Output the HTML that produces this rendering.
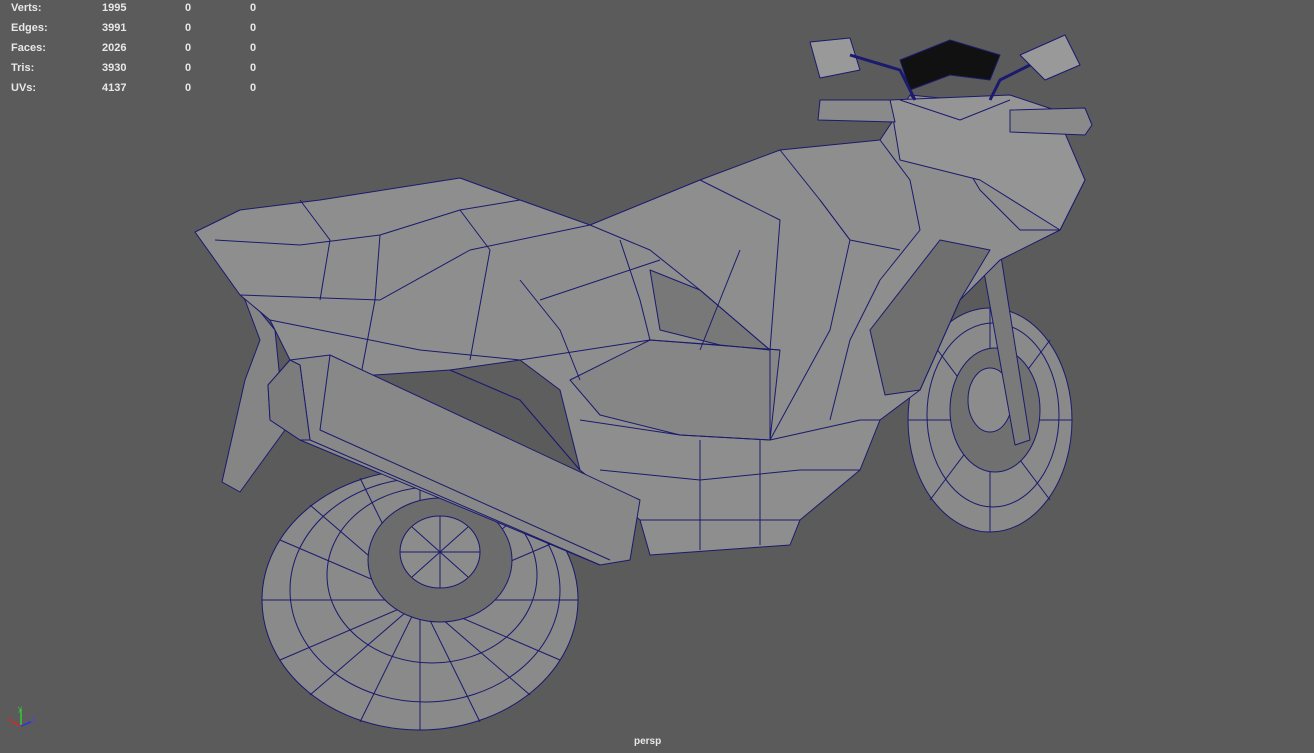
<!DOCTYPE html>
<html><head><meta charset="utf-8"><style>
html,body{margin:0;padding:0;width:1314px;height:753px;overflow:hidden;background:#5b5b5b;font-family:"Liberation Sans",sans-serif}
.s{position:absolute;color:#e8e8e8;font-size:11px;font-weight:bold}
</style></head><body>
<div class="s" style="left:11px;top:-2px;line-height:20px">Verts:<br>Edges:<br>Faces:<br>Tris:<br>UVs:</div>
<div class="s" style="left:102px;top:-2px;line-height:20px">1995<br>3991<br>2026<br>3930<br>4137</div>
<div class="s" style="left:185px;top:-2px;line-height:20px">0<br>0<br>0<br>0<br>0</div>
<div class="s" style="left:250px;top:-2px;line-height:20px">0<br>0<br>0<br>0<br>0</div>
<div class="s" style="left:634px;top:736px;font-size:10px">persp</div>
<svg width="1314" height="753" style="position:absolute;left:0;top:0" stroke="#1a1a6e" stroke-width="1">
<g stroke-linejoin="round">
<!-- rear wheel -->
<ellipse cx="420" cy="600" rx="158" ry="130" fill="#8a8a8a"/>
<ellipse cx="425" cy="590" rx="135" ry="112" fill="none"/>
<ellipse cx="432" cy="575" rx="105" ry="88" fill="none"/>
<g fill="none">
<line x1="262" y1="600" x2="578" y2="600"/><line x1="420" y1="470" x2="420" y2="730"/>
<line x1="310" y1="505" x2="530" y2="695"/><line x1="530" y1="505" x2="310" y2="695"/>
<line x1="280" y1="540" x2="560" y2="660"/><line x1="280" y1="660" x2="560" y2="540"/>
<line x1="360" y1="478" x2="480" y2="722"/><line x1="480" y1="478" x2="360" y2="722"/>
</g>
<ellipse cx="440" cy="560" rx="72" ry="62" fill="#6c6c6c"/>
<ellipse cx="440" cy="552" rx="40" ry="36" fill="#8c8c8c"/>
<g fill="none"><line x1="400" y1="552" x2="480" y2="552"/><line x1="440" y1="516" x2="440" y2="588"/><line x1="412" y1="527" x2="468" y2="577"/><line x1="468" y1="527" x2="412" y2="577"/></g>
<!-- front wheel -->
<ellipse cx="990" cy="420" rx="82" ry="112" fill="#8a8a8a"/>
<ellipse cx="993" cy="415" rx="66" ry="92" fill="none"/>
<g fill="none">
<line x1="908" y1="420" x2="1072" y2="420"/><line x1="990" y1="308" x2="990" y2="532"/>
<line x1="930" y1="340" x2="1050" y2="500"/><line x1="1050" y1="340" x2="930" y2="500"/>
</g>
<ellipse cx="995" cy="410" rx="45" ry="62" fill="#707070"/>
<ellipse cx="990" cy="400" rx="22" ry="32" fill="#8c8c8c"/>
<!-- fork -->
<polygon points="980,250 1000,250 1030,440 1015,445" fill="#7a7a7a"/>
<!-- tail side panel -->
<polygon points="195,232 245,300 260,340 245,380 222,482 240,492 285,430 275,330" fill="#858585"/>
<!-- main body -->
<polygon points="195,232 240,210 320,200 460,178 520,200 590,225 700,180 780,150 880,140 910,95 960,100 1060,130 1085,180 1060,230 1000,260 960,300 920,390 880,420 860,470 800,520 790,545 650,555 640,520 580,470 520,400 450,370 300,380 270,320 240,295" fill="#8e8e8e"/>
<polygon points="940,240 990,250 960,300 920,390 885,395 870,330" fill="#6f6f6f"/>
<polygon points="570,380 650,340 720,345 780,350 770,440 680,435 600,415" fill="#868686"/>
<polygon points="450,370 520,360 560,390 580,470 520,400" fill="#5e5e5e"/>
<polygon points="650,270 700,290 770,350 720,345 660,330" fill="#787878"/>
<polygon points="900,60 950,40 1000,55 990,80 950,75 910,90" fill="#111"/>
<g fill="none">
<polyline points="215,240 300,245 380,235 460,210 520,200"/>
<polyline points="240,295 380,300 470,250 590,225"/>
<polyline points="270,320 420,350 520,360 650,340 780,350"/>
<polyline points="460,210 490,250 470,360"/>
<polyline points="380,235 375,300 360,380"/>
<polyline points="590,225 650,250 700,290 770,350 770,440"/>
<polyline points="700,180 740,200 780,220 770,350"/>
<polyline points="780,150 820,200 850,240 830,330 770,440"/>
<polyline points="880,140 910,180 920,230 880,280 850,340 830,420"/>
<polyline points="910,95 950,140 980,190 1020,230 1060,230"/>
<polyline points="960,100 990,150 1040,170 1085,180"/>
<polyline points="580,420 680,435 770,440 860,420 880,420"/>
<polyline points="600,470 700,480 800,470 860,470"/>
<polyline points="640,520 720,520 800,520"/>
<polyline points="520,280 560,330 580,380"/>
<polyline points="620,240 640,300 650,340"/>
<polyline points="820,200 850,240 900,250"/>
<polyline points="300,200 330,240 320,300"/>
<polyline points="540,300 600,280 660,260"/>
<polyline points="700,350 720,300 740,250"/>
<line x1="700" y1="440" x2="700" y2="550"/><line x1="760" y1="440" x2="760" y2="545"/>
</g>
<!-- exhaust -->
<polygon points="290,360 330,355 640,500 630,560 600,565 300,440 270,420 268,385" fill="#888"/>
<polyline points="300,365 310,440 600,565" fill="none"/>
<polyline points="330,355 320,430 610,560" fill="none"/>
<polygon points="268,385 290,360 300,365 310,440 300,440 270,420" fill="#7c7c7c"/>
<!-- headlight / mirrors / bars -->
<polygon points="890,100 1010,95 1055,110 1085,180 1060,230 980,180 900,160" fill="#959595"/>
<polyline points="900,100 960,120 1010,100" fill="none"/>
<polygon points="810,42 850,38 860,70 820,78" fill="#999"/>
<polygon points="1020,55 1065,35 1080,65 1045,80" fill="#999"/>
<polyline points="850,55 900,70 915,100" fill="none" stroke-width="3"/>
<polyline points="1030,65 1000,80 990,100" fill="none" stroke-width="3"/>
<polygon points="820,100 890,100 895,122 818,120" fill="#8a8a8a"/>
<polygon points="1010,110 1085,108 1092,125 1085,135 1010,132" fill="#8a8a8a"/>
</g>
<line x1="21" y1="726" x2="21" y2="709" stroke="#3c3" stroke-width="1.5"/>
<line x1="21" y1="726" x2="12" y2="722" stroke="#d22" stroke-width="1.5"/>
<line x1="21" y1="726" x2="31" y2="722" stroke="#33d" stroke-width="1.5"/>
<text x="18" y="711" fill="#3c3" font-size="8" stroke="none" font-family="Liberation Sans">y</text>
<text x="8" y="722" fill="#d22" font-size="8" stroke="none" font-family="Liberation Sans">x</text>
<text x="31" y="722" fill="#44e" font-size="8" stroke="none" font-family="Liberation Sans">z</text>
</svg>
</body></html>
